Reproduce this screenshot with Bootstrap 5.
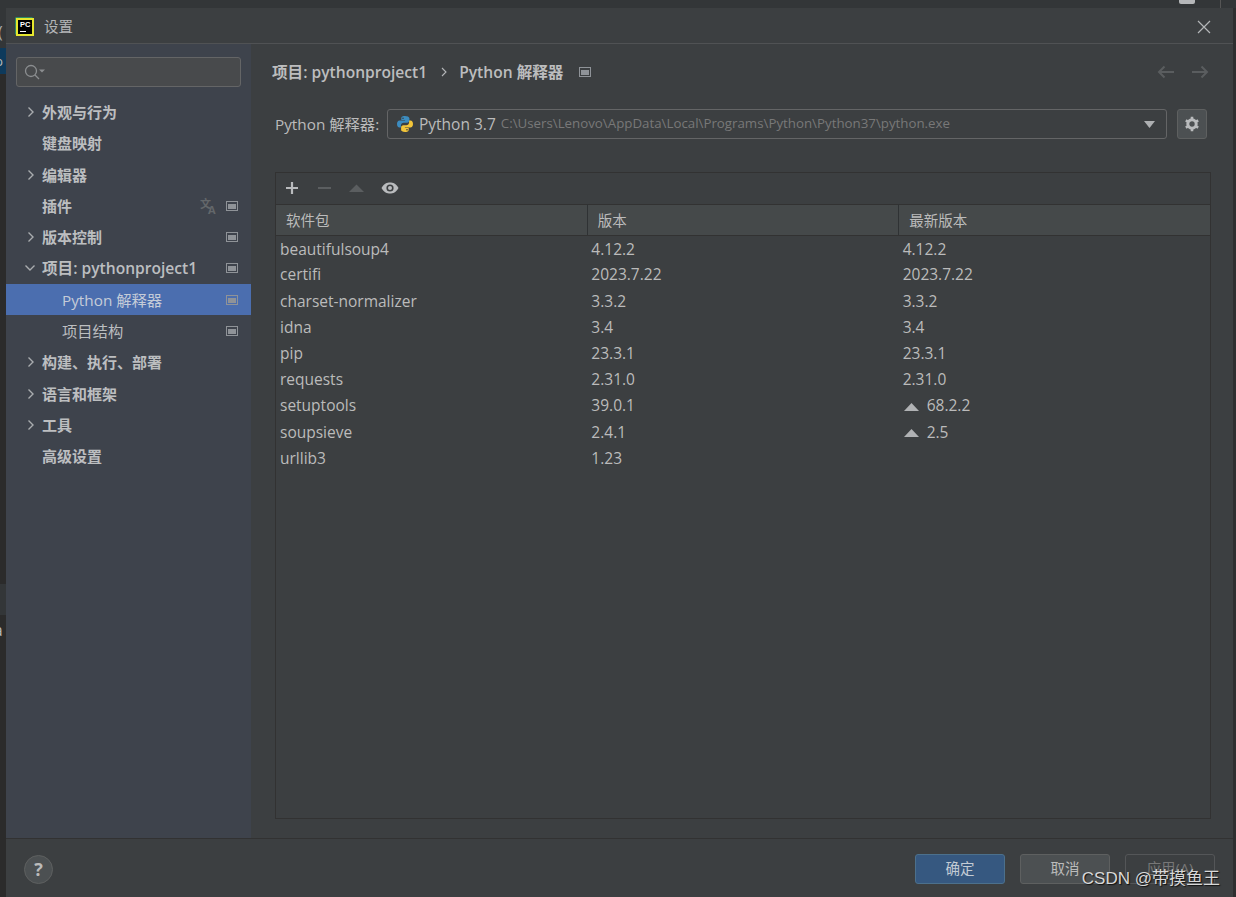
<!DOCTYPE html>
<html lang="zh">
<head>
<meta charset="utf-8">
<title>设置</title>
<link rel="stylesheet" href="https://cdn.jsdelivr.net/npm/bootstrap@5.3.0/dist/css/bootstrap.min.css">
<style>
html,body{height:897px;overflow:hidden}
body{background:#2b2b2b;font-family:"Open Sans","Noto Sans CJK SC",sans-serif;font-size:15.5px;color:#bbb;line-height:1.2}
.topstrip{height:8px;background:#333638;flex:none;position:relative}
.user-glyph{position:absolute;left:1179px;top:0;width:16px;height:4px;background:#b5b7b9;border-radius:0 0 2px 2px}
.sep-glyph{position:absolute;left:1220px;top:0;width:1px;height:8px;background:#555}
.main-area{height:889px}
.leftstrip{width:6px;flex:none;background:#2b2b2b;overflow:hidden}
.leftstrip .s1{height:40px;background:#333638;color:#aaa;font-size:16px;line-height:48px;text-indent:-2px}
.leftstrip .s2{height:26px;background:#0e3a5c;color:#bbb;font-size:13px;line-height:26px;text-indent:-5px}
.leftstrip .s3{height:510px;background:#2b2b2b}
.leftstrip .s4{height:31px;background:#333638}
.leftstrip .s5{color:#bbb;line-height:30px;text-indent:-6px}
.rightstrip{width:3px;flex:none;background:#2e2f30}
.dlg{background:#3c3f41;min-width:0}
.titlebar{height:36px;border-bottom:1px solid #505254;padding-left:10px;padding-right:22px;padding-top:2px;flex:none;color:#b4b6b8;font-size:14.5px}
.pc-logo{width:18px;height:18px;background:#000;border:2px solid #e6e62e;box-shadow:-1px -1px 0 -0.5px #21d789;position:relative;margin-right:10px;flex:none}
.pc-logo .pc-t{position:absolute;left:2px;top:1px;font:700 7.5px/8px "Liberation Sans",sans-serif;color:#fff}
.pc-logo .pc-u{position:absolute;left:2px;bottom:2px;width:6px;height:1px;background:#fff}
.sidebar{width:245px;flex:none;background:#3e434c;padding:13px 10px 0}
.searchbox{height:30px;background:#484a4c;border:1px solid #646566;border-radius:3px;padding-left:6px;margin-bottom:9.5px}
.navrow{height:31.27px;margin:0 -10px;padding-right:13px;font-weight:600;color:#bcbec0;font-size:15px}
.navrow .chev{width:36px;flex:none;padding-left:20px}
.navrow.sub{font-weight:400;padding-left:56px;font-size:15.3px}
.navrow.sel{background:#4b6eaf;color:#c5ccd8}
.navrow .grow-fill{flex:1 1 auto;white-space:nowrap}
.navrow .grow-fill.wider{font-size:15.6px}
.content-pane{min-width:0;padding:0 22px 19px 24px}
.crumbs{height:56px;font-weight:600;color:#bcbdbe;margin-left:-3px;font-size:15.6px;margin-right:2px}
.crumb-chev{margin:0 12px 0 14px}
.interp-row{margin-top:9px;height:30px;margin-bottom:33px;margin-right:4px}
.interp-label{width:112px;flex:none;white-space:nowrap;font-size:15.3px}
.interp-select{height:30px;border:1px solid #646566;border-radius:3px;padding:0 11px 0 8px;min-width:0;white-space:nowrap;overflow:hidden}
.py-logo{margin-right:5px;flex:none}
.interp-path{color:#787878;font-size:13.3px;margin-left:5px}
.gearbtn{width:30px;height:30px;margin-left:10px;background:#4c5052;border:1px solid #5e6060;border-radius:3px;flex:none}
.pkgpanel{border:1px solid #323232;min-height:0}
.pkgbar{height:31px;padding:0 0 2px 9px;gap:13px;flex:none}
.pkgtable{--bs-table-bg:transparent;--bs-table-color:#bbb;table-layout:fixed;color:#bbb}
.pkgtable th{font-weight:400;background:#45494a;height:31px;padding:1px 0 0 10px;vertical-align:middle;border-top:1px solid #323232;border-bottom:1px solid #323232;border-right:1px solid #2f3234;color:#bbb;font-size:14.5px;box-shadow:none}
.pkgtable th:last-child{border-right:0}
.pkgtable td{height:26.2px;padding:0 0 0 4px;vertical-align:middle;border:0;box-shadow:none;white-space:nowrap}
.upg{margin:0 8px 0 1px}
.footerbar{height:59px;border-top:1px solid #323232;flex:none;padding:2px 18px 0 18px;position:relative}
.helpbtn{width:29px;height:29px;border-radius:50%;background:#4c5052;border:1px solid #5e6060;color:#bbb;font-weight:700;font-size:18px;line-height:1}
.ftbtn{width:90px;height:30px;margin-left:15px;border:1px solid #5e6060;border-radius:3px;background:#4c5052;color:#bbb;font-size:14.5px;padding:0;--bs-btn-hover-bg:#4c5052;line-height:1}
.ftbtn.primary{background:#365880;border-color:#4c708c;color:#c3cbd4}
.ftbtn.muted{background:transparent;border-color:#545658;color:#777}
.watermark{position:absolute;right:13px;bottom:8px;color:#d8d8d8;font:17px "Liberation Sans","Noto Sans CJK SC",sans-serif;text-shadow:1px 1px 1px #111;white-space:nowrap}
</style>
</head>
<body>
<svg width="0" height="0" class="d-block position-absolute">
<defs>
<symbol id="pin" viewBox="0 0 12 10"><rect x=".5" y=".5" width="11" height="9" fill="none" stroke="#8f9398"/><rect x="2" y="3" width="8" height="5" fill="#8f9398"/></symbol>
<symbol id="chevr" viewBox="0 0 10 12"><path d="M2.5 1.5 7 6l-4.500 4.500" fill="none" stroke="#a9acaf" stroke-width="1.400"/></symbol>
<symbol id="chevd" viewBox="0 0 12 10"><path d="M1.500 2.500 6 7l4.500-4.500" fill="none" stroke="#a9acaf" stroke-width="1.400"/></symbol>
</defs>
</svg>
<div class="topstrip"><span class="user-glyph"></span><span class="sep-glyph"></span></div>
<div class="d-flex main-area">
  <div class="leftstrip">
    <div class="s1">(</div><div class="s2">p</div><div class="s3"></div><div class="s4"></div><div class="s5">a</div>
  </div>
  <div class="dlg flex-grow-1 d-flex flex-column">
    <div class="titlebar d-flex align-items-center">
      <span class="pc-logo"><span class="pc-t">PC</span><span class="pc-u"></span></span>
      <span>设置</span>
      <svg class="ms-auto" width="14" height="14" viewBox="0 0 14 14"><path d="M1 1l12 12M13 1 1 13" stroke="#b4b6b8" stroke-width="1.200"/></svg>
    </div>
    <div class="d-flex flex-grow-1" style="min-height:0">
      <div class="sidebar">
        <div class="searchbox d-flex align-items-center">
          <svg width="24" height="18" viewBox="0 0 24 18"><circle cx="8" cy="8" r="5.500" fill="none" stroke="#8b8e90" stroke-width="1.300"/><path d="M12 12l4 4" stroke="#8b8e90" stroke-width="1.300"/><path d="M16 6.500h6l-3 3z" fill="#8b8e90"/></svg>
        </div>
        <div class="navrow d-flex align-items-center"><span class="chev"><svg class="d-block" width="10" height="12"><use href="#chevr"/></svg></span><span class="grow-fill">外观与行为</span></div>
        <div class="navrow d-flex align-items-center"><span class="chev"></span><span class="grow-fill">键盘映射</span></div>
        <div class="navrow d-flex align-items-center"><span class="chev"><svg class="d-block" width="10" height="12"><use href="#chevr"/></svg></span><span class="grow-fill">编辑器</span></div>
        <div class="navrow d-flex align-items-center"><span class="chev"></span><span class="grow-fill">插件</span>
          <svg width="18" height="18" viewBox="0 0 18 18" class="me-2"><text x="0" y="11" font-size="11" fill="#63676a" font-family="Noto Sans CJK SC">文</text><text x="8" y="17" font-size="11" font-weight="700" fill="#63676a" font-family="Open Sans">A</text></svg>
          <svg width="12" height="10"><use href="#pin"/></svg></div>
        <div class="navrow d-flex align-items-center"><span class="chev"><svg class="d-block" width="10" height="12"><use href="#chevr"/></svg></span><span class="grow-fill">版本控制</span><svg width="12" height="10"><use href="#pin"/></svg></div>
        <div class="navrow d-flex align-items-center"><span class="chev"><svg class="d-block" style="margin-left:-2px" width="12" height="10"><use href="#chevd"/></svg></span><span class="grow-fill wider">项目: pythonproject1</span><svg width="12" height="10"><use href="#pin"/></svg></div>
        <div class="navrow sub sel d-flex align-items-center"><span class="grow-fill">Python 解释器</span><svg width="12" height="10"><use href="#pin"/></svg></div>
        <div class="navrow sub d-flex align-items-center"><span class="grow-fill">项目结构</span><svg width="12" height="10"><use href="#pin"/></svg></div>
        <div class="navrow d-flex align-items-center"><span class="chev"><svg class="d-block" width="10" height="12"><use href="#chevr"/></svg></span><span class="grow-fill">构建、执行、部署</span></div>
        <div class="navrow d-flex align-items-center"><span class="chev"><svg class="d-block" width="10" height="12"><use href="#chevr"/></svg></span><span class="grow-fill">语言和框架</span></div>
        <div class="navrow d-flex align-items-center"><span class="chev"><svg class="d-block" width="10" height="12"><use href="#chevr"/></svg></span><span class="grow-fill">工具</span></div>
        <div class="navrow d-flex align-items-center"><span class="chev"></span><span class="grow-fill">高级设置</span></div>
      </div>
      <div class="content-pane flex-grow-1 d-flex flex-column">
        <div class="crumbs d-flex align-items-center">
          <span>项目: pythonproject1</span>
          <svg class="crumb-chev" width="6" height="10" viewBox="0 0 6 10"><path d="M1 1l4 4-4 4" fill="none" stroke="#b4b6b8" stroke-width="1.100"/></svg>
          <span>Python 解释器</span>
          <svg class="ms-3" width="12" height="10"><use href="#pin"/></svg>
          <svg class="ms-auto" width="18" height="14" viewBox="0 0 18 14"><path d="M17 7H2M7.500 1.500 2 7l5.500 5.500" fill="none" stroke="#5a5d5f" stroke-width="2"/></svg>
          <svg class="ms-3" width="18" height="14" viewBox="0 0 18 14"><path d="M1 7h15M10.500 1.500 16 7l-5.500 5.500" fill="none" stroke="#5a5d5f" stroke-width="2"/></svg>
        </div>
        <div class="interp-row d-flex align-items-center">
          <span class="interp-label">Python 解释器:</span>
          <div class="interp-select flex-grow-1 d-flex align-items-center">
            <svg class="py-logo" width="18" height="18" viewBox="0 0 18 18"><path d="M8.900 1C5.600 1 5.300 2.400 5.300 3.200V5h3.800v.6H3.600C2.100 5.600 1 6.800 1 9s1 3.600 2.500 3.600h1.400v-2c0-1.600 1.300-2.800 2.800-2.800h3.500c1.200 0 2.200-1 2.200-2.200V3.200C12.900 1.900 11.500 1 8.900 1z" fill="#3c8cbf"/><path d="M9.100 17c3.300 0 3.600-1.400 3.600-2.200V13H8.900v-.6h5.500c1.500 0 2.600-1.200 2.600-3.400s-1-3.600-2.500-3.600h-1.400v2c0 1.600-1.300 2.800-2.800 2.800H7.300c-1.200 0-2.200 1-2.200 2.200v2.400C5.100 16.100 6.500 17 9.100 17z" fill="#f2c53a"/><circle cx="7" cy="3.200" r=".8" fill="#3c3f41"/><circle cx="11" cy="14.800" r=".8" fill="#3c3f41"/></svg>
            <span>Python 3.7</span><span class="interp-path">C:\Users\Lenovo\AppData\Local\Programs\Python\Python37\python.exe</span>
            <svg class="ms-auto flex-none" width="11" height="7" viewBox="0 0 11 7"><path d="M0 0h11L5.500 7z" fill="#aeb0b2"/></svg>
          </div>
          <div class="gearbtn d-flex align-items-center justify-content-center">
            <svg width="16" height="16" viewBox="0 0 16 16"><circle cx="8" cy="8" r="4.200" fill="none" stroke="#b9bbbd" stroke-width="3"/><path d="M8 0.800v3M8 12.200v3M1.800 4.400l2.600 1.500M11.600 10.100l2.600 1.500M1.800 11.600l2.600-1.500M11.600 5.900l2.600-1.500" stroke="#b9bbbd" stroke-width="2.600"/></svg>
          </div>
        </div>
        <div class="pkgpanel flex-grow-1 d-flex flex-column">
          <div class="pkgbar d-flex align-items-center">
            <svg width="19" height="14" viewBox="0 0 19 14"><path d="M7 1v12M1 7h12" stroke="#b9bbbd" stroke-width="2.200"/></svg>
            <svg width="19" height="14" viewBox="0 0 19 14"><path d="M1 7h13" stroke="#5b5e60" stroke-width="2"/></svg>
            <svg width="19" height="14" viewBox="0 0 19 14"><path d="M0 11 7.500 3.500 15 11z" fill="#5b5e60"/></svg>
            <svg width="18" height="14" viewBox="0 0 18 14"><path d="M.5 7C3 2.500 6 1.500 9 1.500S15 2.500 17.500 7C15 11.500 12 12.500 9 12.500S3 11.500.5 7z" fill="#b9bbbd"/><circle cx="9" cy="7" r="3.600" fill="#3c3f41"/><circle cx="9" cy="7" r="2" fill="#b9bbbd"/></svg>
          </div>
          <table class="table table-borderless mb-0 pkgtable">
            <thead><tr><th>软件包</th><th>版本</th><th>最新版本</th></tr></thead>
            <tbody>
              <tr><td>beautifulsoup4</td><td>4.12.2</td><td>4.12.2</td></tr>
              <tr><td>certifi</td><td>2023.7.22</td><td>2023.7.22</td></tr>
              <tr><td>charset-normalizer</td><td>3.3.2</td><td>3.3.2</td></tr>
              <tr><td>idna</td><td>3.4</td><td>3.4</td></tr>
              <tr><td>pip</td><td>23.3.1</td><td>23.3.1</td></tr>
              <tr><td>requests</td><td>2.31.0</td><td>2.31.0</td></tr>
              <tr><td>setuptools</td><td>39.0.1</td><td><svg class="upg" width="15" height="8" viewBox="0 0 15 8"><path d="M0 8 7.500 0 15 8z" fill="#b0b2b4"/></svg>68.2.2</td></tr>
              <tr><td>soupsieve</td><td>2.4.1</td><td><svg class="upg" width="15" height="8" viewBox="0 0 15 8"><path d="M0 8 7.500 0 15 8z" fill="#b0b2b4"/></svg>2.5</td></tr>
              <tr><td>urllib3</td><td>1.23</td><td></td></tr>
            </tbody>
          </table>
        </div>
      </div>
    </div>
    <div class="footerbar d-flex align-items-center">
      <span class="helpbtn d-flex align-items-center justify-content-center">?</span>
      <button class="btn ftbtn primary ms-auto">确定</button>
      <button class="btn ftbtn">取消</button>
      <button class="btn ftbtn muted">应用(A)</button>
      <span class="watermark">CSDN @带摸鱼王</span>
    </div>
  </div>
  <div class="rightstrip"></div>
</div>
</body>
</html>
